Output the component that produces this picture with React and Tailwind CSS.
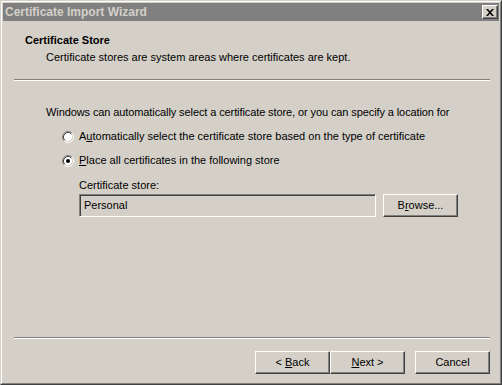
import React from "react";

const font = { fontFamily: '"Liberation Sans", Arial, sans-serif' };

const Radio = ({ checked }) => (
  <svg width="12" height="12" viewBox="0 0 12 12" className="shrink-0">
    <circle cx="6" cy="6" r="4.5" fill="#ffffff" />
    <path d="M2.11 9.89 A5.5 5.5 0 0 1 9.89 2.11" fill="none" stroke="#808080" />
    <path d="M9.89 2.11 A5.5 5.5 0 0 1 2.11 9.89" fill="none" stroke="#ffffff" />
    <path d="M2.82 9.18 A4.5 4.5 0 0 1 9.18 2.82" fill="none" stroke="#404040" />
    <path d="M9.18 2.82 A4.5 4.5 0 0 1 2.82 9.18" fill="none" stroke="#d4d0c8" />
    {checked && <circle cx="6" cy="6" r="2" fill="#000000" />}
  </svg>
);

const Button = ({ children, className = "" }) => (
  <button
    type="button"
    className={`h-[23px] w-[75px] border border-t-white border-l-white border-r-[#404040] border-b-[#404040] bg-[#d4d0c8] text-[11px] leading-[13px] text-black shadow-[inset_-1px_-1px_#808080] ${className}`}
  >
    {children}
  </button>
);

const Separator = ({ className = "" }) => (
  <div className={`ml-[11px] w-[476px] ${className}`}>
    <div className="h-px bg-[#808080]" />
    <div className="h-px bg-white" />
  </div>
);

export default function App() {
  return (
    <div style={font} className="w-[502px] h-[385px] bg-[#d4d0c8] text-black select-none">
      <div className="h-full border border-t-[#d4d0c8] border-l-[#d4d0c8] border-r-[#404040] border-b-[#404040]">
        <div className="h-full flex flex-col border border-t-white border-l-white border-r-[#808080] border-b-[#808080] p-px pb-[9px]">
          {/* title bar */}
          <div className="h-[18px] bg-[#808080] flex items-center justify-between pl-[2px] pr-[1px]">
            <span className="text-[12px] font-bold text-[#d4d0c8] leading-[14px]">Certificate Import Wizard</span>
            <div className="w-[16px] h-[14px] bg-[#d4d0c8] border border-t-white border-l-white border-r-[#404040] border-b-[#404040] shadow-[inset_-1px_-1px_#808080] flex items-center justify-center">
              <svg width="8" height="7" viewBox="0 0 8 7">
                <path d="M0 0h2l2 2.3L6 0h2L5 3.5 8 7H6L4 4.7 2 7H0l3-3.5z" fill="#000" />
              </svg>
            </div>
          </div>

          {/* header */}
          <div className="text-[11px] leading-[13px]">
            <div className="mt-[13px] ml-[22px] font-bold">Certificate Store</div>
            <div className="mt-[4px] ml-[43px]">Certificate stores are system areas where certificates are kept.</div>
          </div>
          <Separator className="mt-[15px]" />

          {/* body */}
          <div className="text-[11px] leading-[13px] ml-[43px]">
            <div className="mt-[25px] tracking-[-0.1px]">Windows can automatically select a certificate store, or you can specify a location for</div>
            <div className="mt-[11px] ml-[16px] flex items-center gap-[5px]">
              <Radio />
              <span>A<u>u</u>tomatically select the certificate store based on the type of certificate</span>
            </div>
            <div className="mt-[11px] ml-[16px] flex items-center gap-[5px]">
              <Radio checked />
              <span><u>P</u>lace all certificates in the following store</span>
            </div>
            <div className="ml-[33px]">
              <div className="mt-[12px]">Certificate store:</div>
              <div className="mt-[2px] flex items-center gap-[7px]">
                <div className="h-[23px] w-[297px] border border-t-[#808080] border-l-[#808080] border-r-white border-b-white shadow-[inset_1px_1px_#404040] flex items-center pl-[4px]">
                  Personal
                </div>
                <Button>B<u>r</u>owse...</Button>
              </div>
            </div>
          </div>

          {/* footer */}
          <div className="mt-auto">
            <Separator />
            <div className="mt-[12px] flex justify-end pr-[9px]">
              <Button>&lt; <u>B</u>ack</Button>
              <Button><u>N</u>ext &gt;</Button>
              <Button className="ml-[10px]">Cancel</Button>
            </div>
          </div>
        </div>
      </div>
    </div>
  );
}
